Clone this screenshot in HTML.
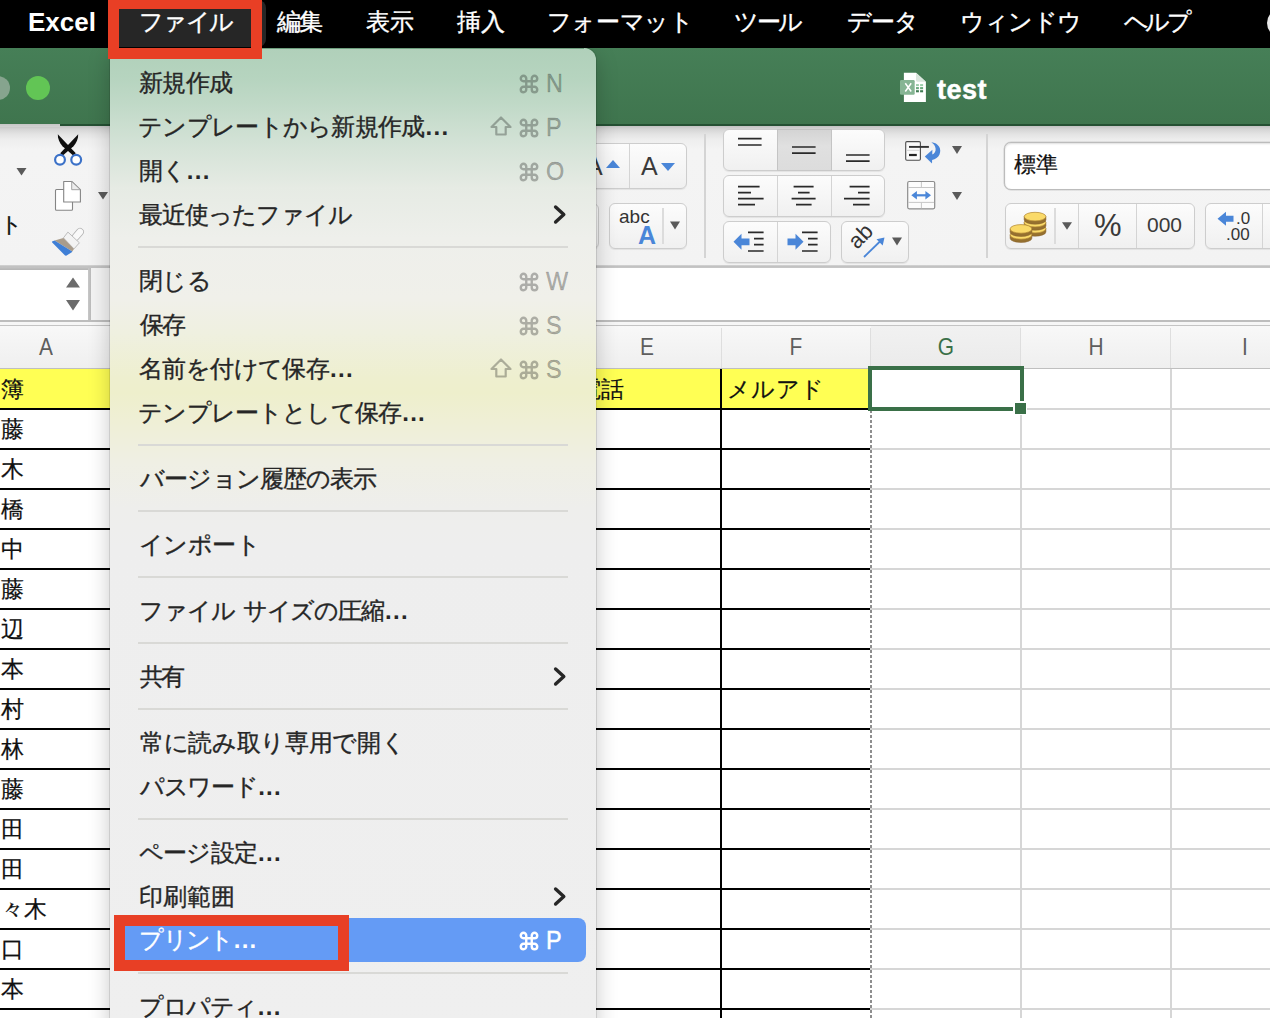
<!DOCTYPE html>
<html lang="ja">
<head>
<meta charset="utf-8">
<title>Excel</title>
<style>
html,body{margin:0;padding:0;}
body{width:1270px;height:1018px;overflow:hidden;position:relative;background:#fff;font-family:"Liberation Sans",sans-serif;color:#222;}
.abs{position:absolute;}
#mbar{position:absolute;left:0;top:0;width:1270px;height:48px;background:#000;z-index:30;}
#mbar span{position:absolute;top:0;height:44px;line-height:44px;color:#fff;font-size:24px;white-space:nowrap;-webkit-text-stroke:0.35px #fff;}
#mbar .app{font-weight:bold;font-size:26px;-webkit-text-stroke:0;}
#mhl{position:absolute;left:112px;top:0;width:154px;height:47px;background:#262626;border-radius:0 8px 8px 0;}
.redbox{position:absolute;border:11px solid #e83f25;box-sizing:border-box;z-index:50;}
#tbar{position:absolute;left:0;top:48px;width:1270px;height:76px;background:linear-gradient(#467f57,#3f754e);}
#tline{position:absolute;left:0;top:124px;width:1270px;height:2px;background:#255033;}
.tl{position:absolute;width:24px;height:24px;border-radius:50%;}
#ttl{position:absolute;left:937px;top:71.5px;height:36px;line-height:36px;font-size:27px;letter-spacing:0.5px;font-weight:bold;color:#fff;-webkit-text-stroke:0.5px #fff;}
#ribbon{position:absolute;left:0;top:126px;width:1270px;height:140px;background:linear-gradient(to bottom,#c2c2c2 0,#d4d4d4 3px,#e3e3e3 8px,#eeeeee 14px,#f4f4f4 24px,#f3f3f3 100%);}
#rline{position:absolute;left:0;top:265px;width:1270px;height:3px;background:linear-gradient(#d6d6d6,#c2c2c2 50%,#c8c8c8);}
.btn{position:absolute;box-sizing:border-box;border:1px solid #cdcdcd;border-radius:6px;background:linear-gradient(#fcfcfc,#f0f0f0);box-shadow:0 1px 1px rgba(0,0,0,0.07);}
.dv{position:absolute;width:1px;background:#d4d4d4;}
.vsep{position:absolute;width:2px;background:#d4d4d4;top:134px;height:124px;}
.ic{position:absolute;}
#fbar{position:absolute;left:0;top:268px;width:1270px;height:52px;background:#fff;}
#colhdr{position:absolute;left:0;top:326px;width:1270px;height:42px;background:linear-gradient(#f8f8f8,#efefef);}
#colhdr span{position:absolute;top:0;height:42px;line-height:42px;font-size:24px;color:#5e5e5e;text-align:center;width:150px;transform:scaleX(0.87);}
.cell{position:absolute;font-size:23px;line-height:40px;height:40px;color:#111;white-space:nowrap;-webkit-text-stroke:0.2px #111;}
#menu{position:absolute;left:110px;top:48px;width:486px;height:990px;z-index:20;border-radius:0 12px 12px 12px;
 background:linear-gradient(to bottom,#b0d0ba 0,#b6d4bf 30px,#c0d9c7 55px,#d3e2d6 95px,#e6ebe4 140px,#eeefeb 190px,#f0f0ea 250px,#eff0e0 285px,#eeefcf 330px,#eeefcc 345px,#efefd6 375px,#efefe4 415px,#eeeeec 460px,#eeeeee 500px,#efefef 100%);
 box-shadow:0 0 0 1px rgba(0,0,0,0.10),0 6px 22px rgba(0,0,0,0.22);}
.mi{position:absolute;height:44px;line-height:43px;font-size:24px;color:#262626;white-space:nowrap;-webkit-text-stroke:0.35px #262626;}
.mi b{margin-left:1px;font-weight:bold;letter-spacing:1.3px;-webkit-text-stroke:0;}
.mi i{font-style:normal;letter-spacing:1px;}
.msep{position:absolute;left:28px;width:430px;height:2px;background:#d9d9d6;}
.sc{position:absolute;height:44px;line-height:45px;font-size:26px;color:#a9aba9;transform:scaleX(0.9);transform-origin:0 50%;-webkit-text-stroke:0.5px currentColor;}
</style>
</head>
<body>
<div id="mbar">
<div id="mhl"></div>
<span class="app" style="left:28px">Excel</span>
<span id="mb0" style="left:139.0px;letter-spacing:-1.63px">ファイル</span>
<span id="mb1" style="left:276.7px;letter-spacing:-1.99px">編集</span>
<span id="mb2" style="left:366.0px;letter-spacing:0.00px">表示</span>
<span id="mb3" style="left:456.5px;letter-spacing:0.42px">挿入</span>
<span id="mb4" style="left:546.8px;letter-spacing:-0.40px">フォーマット</span>
<span id="mb5" style="left:734.0px;letter-spacing:-2.33px">ツール</span>
<span id="mb6" style="left:846.9px;letter-spacing:-0.75px">データ</span>
<span id="mb7" style="left:960.0px;letter-spacing:-0.82px">ウィンドウ</span>
<span id="mb8" style="left:1124.0px;letter-spacing:-3.57px">ヘルプ</span>
<div class="abs" style="left:1267px;top:9px;width:28px;height:28px;border-radius:50%;background:#e9e9e9"></div>
</div>
<div class="redbox" style="left:108px;top:-2px;width:154px;height:61px;"></div>
<div id="tbar"></div><div id="tline"></div>
<div class="tl" style="left:-14px;top:76px;background:#86a48e"></div>
<div class="tl" style="left:26px;top:76px;background:#62c555"></div>
<svg class="abs" style="left:898px;top:70px" width="32" height="36" viewBox="0 0 32 36">
 <path d="M5.900 2.700H18L27.900 11.800V32.100H5.900z" fill="#fff"/>
 <path d="M18 2.700V10.300C18 11.200 18.600 11.800 19.500 11.800H27.900z" fill="#dbe7de"/>
 <rect x="2" y="10" width="14.700" height="14.700" rx="1.200" fill="#86b594"/>
 <path d="M7.300 13.300L13.200 21.500M13.200 13.300L7.300 21.500" stroke="#fff" stroke-width="1.500" fill="none"/>
 <g><rect x="18" y="14.100" width="2.900" height="2" fill="#9ccdaa"/><rect x="22.100" y="14.100" width="3" height="2" fill="#9ccdaa"/><rect x="18" y="17.100" width="2.900" height="2.100" fill="#6aa97d"/><rect x="22.100" y="17.100" width="3" height="2.100" fill="#6aa97d"/><rect x="18" y="20.200" width="2.900" height="2.100" fill="#3f7a52"/><rect x="22.100" y="20.200" width="3" height="2.100" fill="#3f7a52"/></g>
</svg>
<div id="ttl">test</div>
<div id="ribbon"></div><div id="rline"></div>
<div class="abs" style="left:0;top:124px;width:60px;height:3px;background:linear-gradient(#c6c6c6,#d2d2d2)"></div>
<!-- buttons -->
<div class="btn" style="left:570px;top:143px;width:117px;height:46px"></div>
<div class="dv" style="left:629px;top:144px;height:44px"></div>
<div class="btn" style="left:550px;top:203px;width:49px;height:46px"></div>
<div class="btn" style="left:609px;top:203px;width:78px;height:46px"></div>
<div class="dv" style="left:662px;top:208px;height:36px;width:2px;background:#dcdcdc"></div>
<div class="vsep" style="left:704px"></div>
<div class="btn" style="left:723px;top:129px;width:162px;height:42px"></div>
<div class="abs" style="left:777px;top:129px;width:55px;height:42px;background:linear-gradient(#d4d4d4,#e0e0e0 40%,#dcdcdc);border-top:1px solid #c2c2c2;border-bottom:1px solid #c8c8c8;box-sizing:border-box"></div>
<div class="dv" style="left:777px;top:130px;height:40px;background:#c4c4c4"></div>
<div class="dv" style="left:831px;top:130px;height:40px;background:#c4c4c4"></div>
<div class="btn" style="left:723px;top:175px;width:162px;height:42px"></div>
<div class="dv" style="left:777px;top:176px;height:40px"></div>
<div class="dv" style="left:831px;top:176px;height:40px"></div>
<div class="btn" style="left:723px;top:221px;width:108px;height:42px"></div>
<div class="dv" style="left:777px;top:222px;height:40px"></div>
<div class="btn" style="left:841px;top:221px;width:68px;height:42px"></div>
<div class="vsep" style="left:986px"></div>
<div class="btn" style="left:1004px;top:142px;width:300px;height:48px;background:#fff;border-color:#bcbcbc;border-radius:7px;box-shadow:inset 0 1px 2px rgba(0,0,0,0.13),0 0 0 0.5px #cfcfcf"></div>
<div class="btn" style="left:1005px;top:203px;width:190px;height:46px"></div>
<div class="dv" style="left:1054px;top:208px;height:36px;width:2px;background:#dcdcdc"></div>
<div class="dv" style="left:1078px;top:204px;height:44px"></div>
<div class="dv" style="left:1136px;top:204px;height:44px"></div>
<div class="btn" style="left:1205px;top:203px;width:100px;height:46px"></div>
<div class="dv" style="left:1262px;top:204px;height:44px"></div>
<!-- text -->
<div class="abs" style="left:0px;top:211px;font-size:22px;line-height:28px;color:#111;-webkit-text-stroke:0.3px #111">ト</div>
<div class="abs" style="left:586px;top:151px;font-size:25px;line-height:30px;color:#3a3a3a">A</div>
<div class="abs" style="left:641px;top:151px;font-size:25px;line-height:30px;color:#3a3a3a">A</div>
<div class="abs" style="left:619px;top:206px;font-size:19px;line-height:22px;color:#333">abc</div>
<div class="abs" style="left:638px;top:221px;font-size:25px;line-height:28px;font-weight:bold;color:#4a86d8">A</div>
<div class="abs" style="left:1013.8px;top:150px;font-size:22px;line-height:30px;color:#111;-webkit-text-stroke:0.2px #111" id="rbstd">標準</div>
<div class="abs" style="left:1094px;top:208px;font-size:31px;line-height:36px;color:#3a3a3a">%</div>
<div class="abs" style="left:1147px;top:211px;font-size:21px;line-height:28px;color:#3a3a3a">000</div>
<div class="abs" style="left:1236px;top:209px;font-size:17px;line-height:20px;color:#333">.0</div>
<div class="abs" style="left:1226px;top:225px;font-size:17px;line-height:20px;color:#333">.00</div>
<!-- icons -->
<svg class="abs" style="left:0;top:126px" width="1270" height="140" viewBox="0 126 1270 140">
<g fill="#5a5a5a">
 <path d="M16.5 168h10l-5 7.5z"/>
 <path d="M98 192h10l-5 7.5z"/>
 <path d="M670 221.5h10l-5 8z"/>
 <path d="M892 237.5h10l-5 8z"/>
 <path d="M952 146h10l-5 8z"/>
 <path d="M952 192.100h10l-5 7.800z"/>
 <path d="M1062 222.2h10l-5 7.6z"/>
</g>
<g fill="#4a86d8">
 <path d="M606 168h14l-7-8z"/>
 <path d="M661 163h14l-7 8z"/>
</g>
<!-- scissors -->
<g>
 <path d="M57.800 134.300L75.800 153.200L73.200 155.600L62.500 146.200C59.500 143 57.600 138.500 57.800 134.300z" fill="#0f0f0f"/>
 <path d="M78.200 134.300L60.200 153.200L62.800 155.600L73.500 146.200C76.500 143 78.400 138.500 78.200 134.300z" fill="#0f0f0f"/>
 <circle cx="60" cy="159.800" r="4.900" fill="#fff" stroke="#3c72c8" stroke-width="2.200"/>
 <circle cx="76.200" cy="159.800" r="4.900" fill="#fff" stroke="#3c72c8" stroke-width="2.200"/>
</g>
<!-- copy -->
<g fill="#fff" stroke="#858585" stroke-width="1.100" stroke-linejoin="round">
 <rect x="55.500" y="189.500" width="17" height="20.800" rx="1"/>
 <path d="M63.700 181.500H71.700L80.400 189.700V202H63.700z"/>
 <path d="M71.700 181.500V189.700H80.400z" fill="#ececec" stroke="#9a9a9a" stroke-width="0.900"/>
</g>
<!-- paintbrush -->
<g stroke-linejoin="round">
 <path d="M75.600 237L80 231.900" stroke="#b2b2b2" stroke-width="7.800" stroke-linecap="round" fill="none"/>
 <path d="M75.600 237L80 231.900" stroke="#f9f9f9" stroke-width="6.200" stroke-linecap="round" fill="none"/>
 <path d="M67.900 232.100L79.400 242.800L74 248.900L63.400 237.900z" fill="#f3f3f3" stroke="#b6b6b6" stroke-width="0.900"/>
 <path d="M63.400 237.900L74 248.900L72.300 251.600L54.600 240.500z" fill="#a99c8b"/>
 <path d="M54.600 240.500L72.300 251.600L71.800 252.300L66.600 255.400C65.900 255.800 65.300 255.700 64.800 255.200L52.200 242.600C51.700 242 51.900 241.500 52.600 241.300z" fill="#3f7fd6"/>
</g>
<!-- align icons -->
<g stroke="#2a2a2a" stroke-width="1.700" fill="none">
 <path d="M738 138.700h23.600M738 145h23.600"/>
 <path d="M792 147h23.600M792 153.200h23.600"/>
 <path d="M846 155h23.600M846 161.200h23.600"/>
 <path d="M738 186.600h21.600M738 192.600h13M738 198.600h25.600M738 204.600h17"/>
 <path d="M793.600 186.600h20M798 192.600h11.600M791.600 198.600h24M796 204.600h15.600"/>
 <path d="M849.600 186.600h20M858 192.600h11.600M844 198.600h25.600M853 204.600h16.600"/>
 <path d="M748 232.400h15.600M754 238.600h9.600M754 244.600h9.600M748 251h15.600"/>
 <path d="M802 232.400h15.600M808 238.600h9.600M808 244.600h9.600M802 251h15.600"/>
</g>
<g fill="#4a86d8">
 <path d="M733.500 241.800l8-8v4.600h8v6.800h-8v4.600z"/>
 <path d="M803.500 241.800l-8-8v4.600h-8v6.800h8v4.600z"/>
</g>
<!-- orientation -->
<g>
 <text x="0" y="0" transform="translate(857 250) rotate(-45)" font-family="Liberation Sans, sans-serif" font-size="22" fill="#333">ab</text>
 <path d="M864 257L882 239.500" stroke="#4a86d8" stroke-width="1.800" fill="none"/>
 <path d="M884.500 237.500l-8 1.800 6.200 6.200z" fill="#4a86d8"/>
</g>
<!-- wrap text -->
<g>
 <rect x="905.700" y="141.600" width="14.700" height="18.700" rx="1.200" fill="#fafafa" stroke="#4c4c4c" stroke-width="1.100"/>
 <path d="M906.300 150.300h13.500" stroke="#cfcfcf" stroke-width="0.900"/>
 <path d="M909 146.900h19.900" stroke="#333" stroke-width="1.900"/>
 <path d="M909 155h7.800" stroke="#222" stroke-width="2.200"/>
 <path d="M931.300 142.300C938.500 142.800 942 149 939.500 154.500C938.200 157.500 935.500 159.300 932 160L932 154.600C934.500 153.600 936 151.500 935.600 148.500C935.200 145.800 933.500 143.600 931.300 142.300z" fill="#4a86d8"/>
 <path d="M924.800 156.500L932.400 149.800L932 163.600z" fill="#4a86d8"/>
</g>
<!-- merge -->
<g>
 <rect x="907.700" y="181.500" width="27" height="27.300" rx="1.500" fill="#fcfcfc" stroke="#8c8c8c" stroke-width="1.200"/>
 <path d="M908.300 187.500h25.800M908.300 202.400h25.800M921.400 182v5.500M921.400 202.400v5.800" stroke="#c6c6c6" stroke-width="1"/>
 <path d="M915 195.300h12.500" stroke="#4a86d8" stroke-width="2.200"/>
 <path d="M911.300 195.300l5.600-4.300v8.600zM931 195.300l-5.600-4.300v8.600z" fill="#4a86d8"/>
</g>
<!-- coins -->
<g>
<path d="M1024.15 228.60v3.30a10.90 4.30 0 0 0 21.80 0v-3.30z" fill="#95702f" stroke="#86602a" stroke-width="0.5"/><ellipse cx="1035.05" cy="228.60" rx="10.90" ry="4.30" fill="#fada69" stroke="#b08532" stroke-width="0.7"/>
<path d="M1024.15 222.60v3.30a10.90 4.30 0 0 0 21.80 0v-3.30z" fill="#95702f" stroke="#86602a" stroke-width="0.5"/><ellipse cx="1035.05" cy="222.60" rx="10.90" ry="4.30" fill="#fada69" stroke="#b08532" stroke-width="0.7"/>
<path d="M1024.15 216.60v3.30a10.90 4.30 0 0 0 21.80 0v-3.30z" fill="#95702f" stroke="#86602a" stroke-width="0.5"/><ellipse cx="1035.05" cy="216.60" rx="10.90" ry="4.30" fill="#fada69" stroke="#b08532" stroke-width="0.7"/>
<path d="M1010.10 234.90v3.30a10.90 4.30 0 0 0 21.80 0v-3.30z" fill="#95702f" stroke="#86602a" stroke-width="0.5"/><ellipse cx="1021.00" cy="234.90" rx="10.90" ry="4.30" fill="#fada69" stroke="#b08532" stroke-width="0.7"/>
<path d="M1010.10 228.90v3.30a10.90 4.30 0 0 0 21.80 0v-3.30z" fill="#95702f" stroke="#86602a" stroke-width="0.5"/><ellipse cx="1021.00" cy="228.90" rx="10.90" ry="4.30" fill="#fada69" stroke="#b08532" stroke-width="0.7"/>
</g>
<!-- decimal arrow -->
<path d="M1217.500 218.800l8.500-7v4h7.500v6h-7.500v4z" fill="#4a86d8"/>
</svg>

<div id="fbar"></div>
<div class="abs" style="left:0;top:267px;width:110px;height:3px;background:linear-gradient(#c4c4c4,#b4b4b4)"></div>
<div class="abs" style="left:88px;top:268px;width:3px;height:52px;background:linear-gradient(to right,#c9c9c9,#b9b9b9)"></div>
<div class="abs" style="left:91px;top:268px;width:30px;height:52px;background:#f3f3f3"></div>
<svg class="abs" style="left:64px;top:275px" width="18" height="38" viewBox="0 0 18 38"><path d="M2 12.5L9 2.5L16 12.5z M2 25L9 35.5L16 25z" fill="#6b6b6b"/></svg>
<div class="abs" style="left:0;top:320px;width:1270px;height:2px;background:#bdbdbd"></div>
<div class="abs" style="left:0;top:322px;width:1270px;height:3px;background:#f6f6f6"></div>
<div class="abs" style="left:0;top:325px;width:1270px;height:1px;background:#c4c4c4"></div>
<div id="colhdr">
<div class="abs" style="left:871px;top:0;width:150px;height:42px;background:linear-gradient(#f1f1f1,#ebebeb)"></div>
<span style="left:-29px">A</span>
<span style="left:572px">E</span>
<span style="left:721px">F</span>
<span style="left:871px;color:#3a7048">G</span>
<span style="left:1021px">H</span>
<span style="left:1170px">I</span>
<div class="abs" style="left:721px;top:2px;width:1px;height:40px;background:#dedede"></div>
<div class="abs" style="left:870px;top:2px;width:1px;height:40px;background:#dedede"></div>
<div class="abs" style="left:1020px;top:2px;width:1px;height:40px;background:#dedede"></div>
<div class="abs" style="left:1170px;top:2px;width:1px;height:40px;background:#dedede"></div>
</div>
<div class="abs" style="left:0;top:368px;width:1270px;height:1px;background:#bfbfbf"></div>
<div class="abs" style="left:0;top:369px;width:870px;height:39px;background:#ffff54"></div>
<div class="abs" style="left:870px;top:408px;width:400px;height:2px;background:#d6d6d6"></div>
<div class="abs" style="left:870px;top:448px;width:400px;height:2px;background:#d6d6d6"></div>
<div class="abs" style="left:870px;top:488px;width:400px;height:2px;background:#d6d6d6"></div>
<div class="abs" style="left:870px;top:528px;width:400px;height:2px;background:#d6d6d6"></div>
<div class="abs" style="left:870px;top:568px;width:400px;height:2px;background:#d6d6d6"></div>
<div class="abs" style="left:870px;top:608px;width:400px;height:2px;background:#d6d6d6"></div>
<div class="abs" style="left:870px;top:648px;width:400px;height:2px;background:#d6d6d6"></div>
<div class="abs" style="left:870px;top:688px;width:400px;height:2px;background:#d6d6d6"></div>
<div class="abs" style="left:870px;top:728px;width:400px;height:2px;background:#d6d6d6"></div>
<div class="abs" style="left:870px;top:768px;width:400px;height:2px;background:#d6d6d6"></div>
<div class="abs" style="left:870px;top:808px;width:400px;height:2px;background:#d6d6d6"></div>
<div class="abs" style="left:870px;top:848px;width:400px;height:2px;background:#d6d6d6"></div>
<div class="abs" style="left:870px;top:888px;width:400px;height:2px;background:#d6d6d6"></div>
<div class="abs" style="left:870px;top:928px;width:400px;height:2px;background:#d6d6d6"></div>
<div class="abs" style="left:870px;top:968px;width:400px;height:2px;background:#d6d6d6"></div>
<div class="abs" style="left:870px;top:1008px;width:400px;height:2px;background:#d6d6d6"></div>
<div class="abs" style="left:1020px;top:369px;width:2px;height:660px;background:#d6d6d6"></div>
<div class="abs" style="left:1170px;top:369px;width:2px;height:660px;background:#d6d6d6"></div>
<div class="abs" style="left:0;top:408px;width:870px;height:2px;background:#000"></div>
<div class="abs" style="left:0;top:448px;width:870px;height:2px;background:#000"></div>
<div class="abs" style="left:0;top:488px;width:870px;height:2px;background:#000"></div>
<div class="abs" style="left:0;top:528px;width:870px;height:2px;background:#000"></div>
<div class="abs" style="left:0;top:568px;width:870px;height:2px;background:#000"></div>
<div class="abs" style="left:0;top:608px;width:870px;height:2px;background:#000"></div>
<div class="abs" style="left:0;top:648px;width:870px;height:2px;background:#000"></div>
<div class="abs" style="left:0;top:688px;width:870px;height:2px;background:#000"></div>
<div class="abs" style="left:0;top:728px;width:870px;height:2px;background:#000"></div>
<div class="abs" style="left:0;top:768px;width:870px;height:2px;background:#000"></div>
<div class="abs" style="left:0;top:808px;width:870px;height:2px;background:#000"></div>
<div class="abs" style="left:0;top:848px;width:870px;height:2px;background:#000"></div>
<div class="abs" style="left:0;top:888px;width:870px;height:2px;background:#000"></div>
<div class="abs" style="left:0;top:928px;width:870px;height:2px;background:#000"></div>
<div class="abs" style="left:0;top:968px;width:870px;height:2px;background:#000"></div>
<div class="abs" style="left:0;top:1008px;width:870px;height:2px;background:#000"></div>
<div class="abs" style="left:720px;top:369px;width:2px;height:660px;background:#000"></div>
<div class="abs" style="left:870px;top:410px;width:2px;height:620px;background:repeating-linear-gradient(to bottom,#8e8e8e 0,#8e8e8e 3px,rgba(255,255,255,0) 3px,rgba(255,255,255,0) 5px)"></div>
<div class="cell" style="left:1px;top:369px">簿</div>
<div class="cell" style="left:1px;top:409px">藤</div>
<div class="cell" style="left:1px;top:449px">木</div>
<div class="cell" style="left:1px;top:489px">橋</div>
<div class="cell" style="left:1px;top:529px">中</div>
<div class="cell" style="left:1px;top:569px">藤</div>
<div class="cell" style="left:1px;top:609px">辺</div>
<div class="cell" style="left:1px;top:649px">本</div>
<div class="cell" style="left:1px;top:689px">村</div>
<div class="cell" style="left:1px;top:729px">林</div>
<div class="cell" style="left:1px;top:769px">藤</div>
<div class="cell" style="left:1px;top:809px">田</div>
<div class="cell" style="left:1px;top:849px">田</div>
<div class="cell" style="left:1px;top:889px">々木</div>
<div class="cell" style="left:1px;top:929px">口</div>
<div class="cell" style="left:1px;top:969px">本</div>
<div class="cell" style="left:578.4px;top:369px">電話</div>
<div class="cell" id="cF" style="left:727.0px;top:369px;letter-spacing:0.47px">メルアド</div>
<div class="abs" style="left:868px;top:366px;width:156px;height:45px;border:4px solid #3a7048;box-sizing:border-box;background:#fff"></div>
<div class="abs" style="left:1013px;top:401px;width:14px;height:14px;background:#fff"></div>
<div class="abs" style="left:1015px;top:403px;width:11px;height:11px;background:#3a7048"></div><div id="menu">
<div class="abs" style="left:0;top:0;width:474px;height:1px;background:#6f9f7e"></div>
<div class="mi" id="mi0" style="left:28.8px;top:13px;letter-spacing:-0.49px">新規作成</div>
<svg class="abs" style="left:407.5px;top:24.5px" width="22" height="22" viewBox="0 0 24 24" fill="none" stroke="rgba(0,0,0,0.28)" stroke-width="2.6"><path d="M18 3a3 3 0 0 0-3 3v12a3 3 0 0 0 3 3 3 3 0 0 0 3-3 3 3 0 0 0-3-3H6a3 3 0 0 0-3 3 3 3 0 0 0 3 3 3 3 0 0 0 3-3V6a3 3 0 0 0-3-3 3 3 0 0 0-3 3 3 3 0 0 0 3 3h12a3 3 0 0 0 3-3 3 3 0 0 0-3-3z"/></svg>
<div class="sc" style="left:436px;top:13px;color:rgba(0,0,0,0.28)">N</div>
<div class="mi" id="mi1" style="left:28.2px;top:57px;letter-spacing:-0.72px">テンプレートから新規作成<b>...</b></div>
<svg class="abs" style="left:380px;top:68px" width="22" height="20" viewBox="0 0 22 20" fill="none" stroke="rgba(0,0,0,0.28)" stroke-width="2.2" stroke-linejoin="round"><path d="M11 1.5L20.5 11H15.7V18.5H6.3V11H1.5z"/></svg>
<svg class="abs" style="left:407.5px;top:68.5px" width="22" height="22" viewBox="0 0 24 24" fill="none" stroke="rgba(0,0,0,0.28)" stroke-width="2.6"><path d="M18 3a3 3 0 0 0-3 3v12a3 3 0 0 0 3 3 3 3 0 0 0 3-3 3 3 0 0 0-3-3H6a3 3 0 0 0-3 3 3 3 0 0 0 3 3 3 3 0 0 0 3-3V6a3 3 0 0 0-3-3 3 3 0 0 0-3 3 3 3 0 0 0 3 3h12a3 3 0 0 0 3-3 3 3 0 0 0-3-3z"/></svg>
<div class="sc" style="left:436px;top:57px;color:rgba(0,0,0,0.28)">P</div>
<div class="mi" id="mi2" style="left:28.7px;top:101px;letter-spacing:-0.99px">開く<b>...</b></div>
<svg class="abs" style="left:407.5px;top:112.5px" width="22" height="22" viewBox="0 0 24 24" fill="none" stroke="rgba(0,0,0,0.28)" stroke-width="2.6"><path d="M18 3a3 3 0 0 0-3 3v12a3 3 0 0 0 3 3 3 3 0 0 0 3-3 3 3 0 0 0-3-3H6a3 3 0 0 0-3 3 3 3 0 0 0 3 3 3 3 0 0 0 3-3V6a3 3 0 0 0-3-3 3 3 0 0 0-3 3 3 3 0 0 0 3 3h12a3 3 0 0 0 3-3 3 3 0 0 0-3-3z"/></svg>
<div class="sc" style="left:436px;top:101px;color:rgba(0,0,0,0.28)">O</div>
<div class="mi" id="mi3" style="left:28.9px;top:145px;letter-spacing:-0.96px">最近使ったファイル</div>
<svg class="abs" style="left:443px;top:156px" width="14" height="22" viewBox="0 0 14 22" fill="none" stroke="#262626" stroke-width="3.4" stroke-linecap="round" stroke-linejoin="round"><path d="M2.600 3L10.800 10.500L2.600 18"/></svg>
<div class="msep" style="top:198px"></div>
<div class="mi" id="mi4" style="left:28.7px;top:211px;letter-spacing:-0.22px">閉じる</div>
<svg class="abs" style="left:407.5px;top:222.5px" width="22" height="22" viewBox="0 0 24 24" fill="none" stroke="rgba(0,0,0,0.28)" stroke-width="2.6"><path d="M18 3a3 3 0 0 0-3 3v12a3 3 0 0 0 3 3 3 3 0 0 0 3-3 3 3 0 0 0-3-3H6a3 3 0 0 0-3 3 3 3 0 0 0 3 3 3 3 0 0 0 3-3V6a3 3 0 0 0-3-3 3 3 0 0 0-3 3 3 3 0 0 0 3 3h12a3 3 0 0 0 3-3 3 3 0 0 0-3-3z"/></svg>
<div class="sc" style="left:436px;top:211px;color:rgba(0,0,0,0.28)">W</div>
<div class="mi" id="mi5" style="left:30.3px;top:255px;letter-spacing:-2.24px">保存</div>
<svg class="abs" style="left:407.5px;top:266.5px" width="22" height="22" viewBox="0 0 24 24" fill="none" stroke="rgba(0,0,0,0.28)" stroke-width="2.6"><path d="M18 3a3 3 0 0 0-3 3v12a3 3 0 0 0 3 3 3 3 0 0 0 3-3 3 3 0 0 0-3-3H6a3 3 0 0 0-3 3 3 3 0 0 0 3 3 3 3 0 0 0 3-3V6a3 3 0 0 0-3-3 3 3 0 0 0-3 3 3 3 0 0 0 3 3h12a3 3 0 0 0 3-3 3 3 0 0 0-3-3z"/></svg>
<div class="sc" style="left:436px;top:255px;color:rgba(0,0,0,0.28)">S</div>
<div class="mi" id="mi6" style="left:29.1px;top:299px;letter-spacing:-0.63px">名前を付けて保存<b>...</b></div>
<svg class="abs" style="left:380px;top:310px" width="22" height="20" viewBox="0 0 22 20" fill="none" stroke="rgba(0,0,0,0.28)" stroke-width="2.2" stroke-linejoin="round"><path d="M11 1.5L20.5 11H15.7V18.5H6.3V11H1.5z"/></svg>
<svg class="abs" style="left:407.5px;top:310.5px" width="22" height="22" viewBox="0 0 24 24" fill="none" stroke="rgba(0,0,0,0.28)" stroke-width="2.6"><path d="M18 3a3 3 0 0 0-3 3v12a3 3 0 0 0 3 3 3 3 0 0 0 3-3 3 3 0 0 0-3-3H6a3 3 0 0 0-3 3 3 3 0 0 0 3 3 3 3 0 0 0 3-3V6a3 3 0 0 0-3-3 3 3 0 0 0-3 3 3 3 0 0 0 3 3h12a3 3 0 0 0 3-3 3 3 0 0 0-3-3z"/></svg>
<div class="sc" style="left:436px;top:299px;color:rgba(0,0,0,0.28)">S</div>
<div class="mi" id="mi7" style="left:28.2px;top:343px;letter-spacing:-0.82px">テンプレートとして保存<b>...</b></div>
<div class="msep" style="top:396px"></div>
<div class="mi" id="mi8" style="left:30.3px;top:409px;letter-spacing:-0.91px">バージョン履歴の表示</div>
<div class="msep" style="top:462px"></div>
<div class="mi" id="mi9" style="left:28.6px;top:475px;letter-spacing:-0.47px">インポート</div>
<div class="msep" style="top:528px"></div>
<div class="mi" id="mi10" style="left:29.4px;top:541px;letter-spacing:-1.11px">ファイル<i> </i>サイズの圧縮<b>...</b></div>
<div class="msep" style="top:594px"></div>
<div class="mi" id="mi11" style="left:30.1px;top:607px;letter-spacing:-3.06px">共有</div>
<svg class="abs" style="left:443px;top:618px" width="14" height="22" viewBox="0 0 14 22" fill="none" stroke="#262626" stroke-width="3.4" stroke-linecap="round" stroke-linejoin="round"><path d="M2.600 3L10.800 10.500L2.600 18"/></svg>
<div class="msep" style="top:660px"></div>
<div class="mi" id="mi12" style="left:30.2px;top:673px;letter-spacing:-0.36px">常に読み取り専用で開く</div>
<div class="mi" id="mi13" style="left:30.4px;top:717px;letter-spacing:-1.45px">パスワード<b>...</b></div>
<div class="msep" style="top:770px"></div>
<div class="mi" id="mi14" style="left:29.0px;top:783px;letter-spacing:-0.79px">ページ設定<b>...</b></div>
<div class="mi" id="mi15" style="left:28.5px;top:827px;letter-spacing:0.00px">印刷範囲</div>
<svg class="abs" style="left:443px;top:838px" width="14" height="22" viewBox="0 0 14 22" fill="none" stroke="#262626" stroke-width="3.4" stroke-linecap="round" stroke-linejoin="round"><path d="M2.600 3L10.800 10.500L2.600 18"/></svg>
<div class="abs" style="left:5px;top:870px;width:471px;height:44px;background:#649bf5;border-radius:8px"></div>
<div class="mi" id="mi16" style="left:29.2px;top:870px;letter-spacing:-1.63px;color:#fff;-webkit-text-stroke-color:#fff">プリント<b>...</b></div>
<svg class="abs" style="left:407.5px;top:881.5px" width="22" height="22" viewBox="0 0 24 24" fill="none" stroke="#ffffff" stroke-width="2.6"><path d="M18 3a3 3 0 0 0-3 3v12a3 3 0 0 0 3 3 3 3 0 0 0 3-3 3 3 0 0 0-3-3H6a3 3 0 0 0-3 3 3 3 0 0 0 3 3 3 3 0 0 0 3-3V6a3 3 0 0 0-3-3 3 3 0 0 0-3 3 3 3 0 0 0 3 3h12a3 3 0 0 0 3-3 3 3 0 0 0-3-3z"/></svg>
<div class="sc" style="left:436px;top:870px;color:#ffffff">P</div>
<div class="msep" style="top:924px"></div>
<div class="mi" id="mi17" style="left:29.2px;top:937px;letter-spacing:-1.47px">プロパティ<b>...</b></div>
</div>
<div class="redbox" style="left:114px;top:915px;width:235px;height:56px;"></div>
</body>
</html>
